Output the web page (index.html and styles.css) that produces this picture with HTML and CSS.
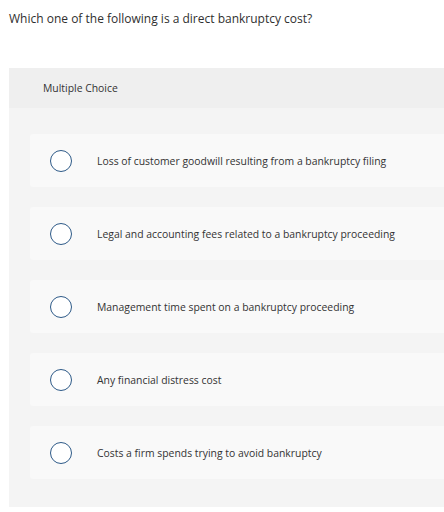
FILE: index.html
```html
<!DOCTYPE html>
<html>
<head>
<meta charset="utf-8">
<link rel="stylesheet" href="styles.css">
</head>
<body>
<div class="question">Which one of the following is a direct bankruptcy cost?</div>
<div class="panel">
  <div class="panel-head">Multiple Choice</div>
  <div class="panel-body">
    <div class="option"><span class="radio"></span><span class="label">Loss of customer goodwill resulting from a bankruptcy filing</span></div>
    <div class="option"><span class="radio"></span><span class="label">Legal and accounting fees related to a bankruptcy proceeding</span></div>
    <div class="option"><span class="radio"></span><span class="label">Management time spent on a bankruptcy proceeding</span></div>
    <div class="option"><span class="radio"></span><span class="label">Any financial distress cost</span></div>
    <div class="option"><span class="radio"></span><span class="label">Costs a firm spends trying to avoid bankruptcy</span></div>
  </div>
</div>
</body>
</html>
```
FILE: styles.css
```css
html, body {
  margin: 0;
  padding: 0;
  background: #ffffff;
}
body {
  font-family: "Open Sans", "Lato", sans-serif;
  color: #333333;
  overflow: hidden;
}
.question {
  padding: 11px 0 0 9px;
  height: 68px;
  box-sizing: border-box;
  font-size: 12px;
  line-height: 16px;
  color: #2f2f2f;
}
.panel {
  margin-left: 9px;
  background: #f4f4f4;
}
.panel-head {
  height: 40px;
  background: #efefef;
  display: flex;
  align-items: center;
  padding-left: 34px;
  font-size: 10.4px;
  color: #333;
}
.panel-body {
  padding: 26px 0 28px 21px;
  display: flex;
  flex-direction: column;
  gap: 20px;
}
.option {
  height: 53px;
  background: #f9f9f9;
  border-radius: 3px 0 0 3px;
  display: flex;
  align-items: center;
  padding-left: 20px;
}
.radio {
  width: 20px;
  height: 20px;
  border: 1.5px solid #2e5a88;
  border-radius: 50%;
  background: #fff;
  flex: none;
}
.label {
  margin-left: 25px;
  font-size: 10.4px;
  color: #333;
}
```
